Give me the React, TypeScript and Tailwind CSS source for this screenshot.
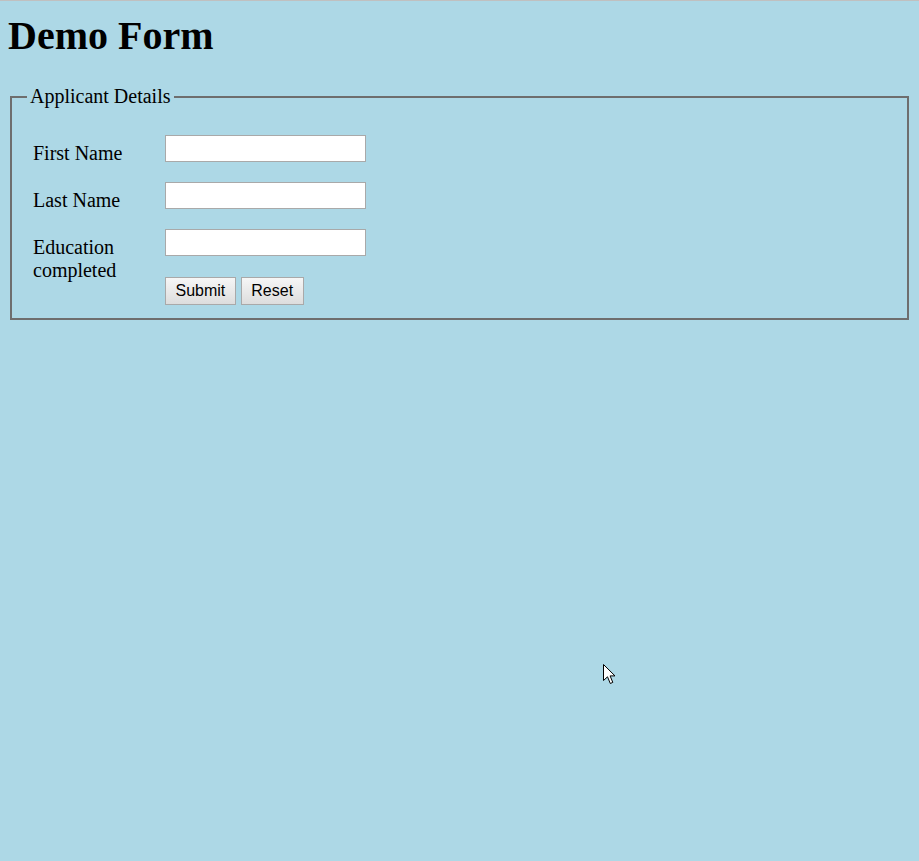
import React from 'react';

const serif = { fontFamily: '"Liberation Serif", "Times New Roman", serif' };

const Cursor: React.FC = () => (
  <svg className="absolute left-[603px] top-[663px]" width="13" height="21" viewBox="0 0 13 21">
    <path
      d="M0.5 0.5 L0.5 16.5 L4.5 12.8 L7.3 19.5 L9.8 18.4 L7.1 11.9 L12 11.9 Z"
      fill="#fff"
      stroke="#000"
      strokeWidth="1"
      strokeLinejoin="miter"
    />
  </svg>
);

const Field: React.FC<{ label: React.ReactNode; children?: React.ReactNode }> = ({ label, children }) => (
  <div className="flex items-start">
    <label className="w-[132px] pt-[7px] text-[20px] leading-[23px] text-black">{label}</label>
    <div className="flex flex-col gap-[21px]">
      <input
        type="text"
        className="h-[27px] w-[201px] border border-[#a9a9a9] bg-white px-1 outline-none"
      />
      {children}
    </div>
  </div>
);

export default function App() {
  return (
    <div className="relative min-h-screen border-t border-[#c0c0c0] bg-[#add8e6]" style={serif}>
      <h1 className="px-[8px] pt-[12px] text-[40px] font-bold leading-[46px] text-black">Demo Form</h1>

      <fieldset className="mx-[10px] mt-[26px] border-2 border-[#6e6e6e] px-[15px] pb-[13px]">
        <legend className="px-[3px] text-[20px] leading-[23px] text-black">Applicant Details</legend>
        <div className="flex flex-col gap-[17px] pl-[6px] pt-[27px]">
          <Field label="First Name" />
          <Field label="Last Name" />
          <Field
            label={
              <>
                Education
                <br />
                completed
              </>
            }
          >
            <div className="flex gap-[5px]">
              {['Submit', 'Reset'].map(b => (
                <button
                  key={b}
                  type="button"
                  className="h-[28px] border border-[#a9a9a9] bg-gradient-to-b from-[#f6f6f6] to-[#dddddd] px-[9.5px] text-[16px] leading-[18px] text-black"
                  style={{ fontFamily: '"Liberation Sans", Arial, sans-serif' }}
                >
                  {b}
                </button>
              ))}
            </div>
          </Field>
        </div>
      </fieldset>

      <Cursor />
    </div>
  );
}
